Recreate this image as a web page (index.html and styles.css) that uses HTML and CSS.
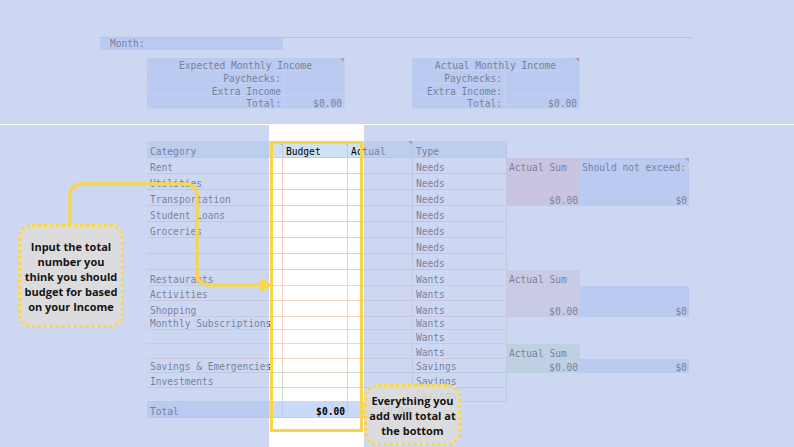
FILE: index.html
```html
<!DOCTYPE html>
<html lang="en">
<head>
<meta charset="utf-8">
<title>Monthly Budget</title>
<link rel="stylesheet" href="styles.css">
</head>
<body>
<div class="page">
  <div class="sheet">
    <div class="month-row"><div class="month-cell">Month:</div></div>

    <div class="income-row">
      <div class="income expected">
        <div class="inc-head comment">Expected Monthly Income</div>
        <div class="inc-label">Paychecks:</div><div class="inc-val"></div>
        <div class="inc-label">Extra Income</div><div class="inc-val"></div>
        <div class="inc-label">Total:</div><div class="inc-val">$0.00</div>
      </div>
      <div class="income actual">
        <div class="inc-head comment">Actual Monthly Income</div>
        <div class="inc-label">Paychecks:</div><div class="inc-val"></div>
        <div class="inc-label">Extra Income:</div><div class="inc-val"></div>
        <div class="inc-label">Total:</div><div class="inc-val">$0.00</div>
      </div>
    </div>

    <div class="budget">
      <div class="tbl">
        <div class="row head"><div class="c comment">Category</div><div class="c comment budget-h">Budget</div><div class="c comment">Actual</div><div class="c">Type</div></div>
        <div class="row needs"><div class="c">Rent</div><div class="c"></div><div class="c"></div><div class="c">Needs</div></div>
        <div class="row needs"><div class="c">Utilities</div><div class="c"></div><div class="c"></div><div class="c">Needs</div></div>
        <div class="row needs"><div class="c">Transportation</div><div class="c"></div><div class="c"></div><div class="c">Needs</div></div>
        <div class="row needs"><div class="c">Student Loans</div><div class="c"></div><div class="c"></div><div class="c">Needs</div></div>
        <div class="row needs"><div class="c">Groceries</div><div class="c"></div><div class="c"></div><div class="c">Needs</div></div>
        <div class="row needs"><div class="c"></div><div class="c"></div><div class="c"></div><div class="c">Needs</div></div>
        <div class="row needs"><div class="c"></div><div class="c"></div><div class="c"></div><div class="c">Needs</div></div>
        <div class="row wants"><div class="c">Restaurants</div><div class="c"></div><div class="c"></div><div class="c">Wants</div></div>
        <div class="row wants"><div class="c">Activities</div><div class="c"></div><div class="c"></div><div class="c">Wants</div></div>
        <div class="row wants"><div class="c">Shopping</div><div class="c"></div><div class="c"></div><div class="c">Wants</div></div>
        <div class="row wants"><div class="c">Monthly Subscriptions</div><div class="c"></div><div class="c"></div><div class="c">Wants</div></div>
        <div class="row wants"><div class="c"></div><div class="c"></div><div class="c"></div><div class="c">Wants</div></div>
        <div class="row wants"><div class="c"></div><div class="c"></div><div class="c"></div><div class="c">Wants</div></div>
        <div class="row saves"><div class="c">Savings &amp; Emergencies</div><div class="c"></div><div class="c"></div><div class="c">Savings</div></div>
        <div class="row saves"><div class="c">Investments</div><div class="c"></div><div class="c"></div><div class="c">Savings</div></div>
        <div class="row saves"><div class="c"></div><div class="c"></div><div class="c"></div><div class="c">Savings</div></div>
        <div class="row total"><div class="c">Total</div><div class="c num strong">$0.00</div><div class="c num">$0.00</div><div class="c plain"></div></div>
      </div>

      <div class="side">
        <div class="blk needs-sum"><span>Actual Sum</span><span class="num">$0.00</span></div>
        <div class="blk needs-cap comment"><span>Should not exceed:</span><span class="num">$0</span></div>
        <div class="blk wants-sum"><span>Actual Sum</span><span class="num">$0.00</span></div>
        <div class="blk wants-cap"><span class="num">$0</span></div>
        <div class="blk save-sum"><span>Actual Sum</span><span class="num">$0.00</span></div>
        <div class="blk save-cap"><span class="num">$0</span></div>
      </div>
    </div>
  </div>

  <div class="shade shade-top"></div>
  <div class="shade shade-left"></div>
  <div class="shade shade-right"></div>

  <div class="focus-box"></div>

  <svg class="arrow" width="794" height="447" viewBox="0 0 794 447">
    <path d="M70 224 V196 Q70 184 82 184 H185 Q197 184 197 196 V273 Q197 285 209 285 H262" fill="none" stroke="#f8d64c" stroke-width="3.5" stroke-linecap="round" stroke-linejoin="round"/>
    <path d="M261 279 L271 285 L261 291 Z" fill="#f8d64c" stroke="#f8d64c" stroke-width="1.5" stroke-linejoin="round"/>
  </svg>

  <div class="callout callout-left">Input the total<br>number you<br>think you should<br>budget for based<br>on your Income</div>
  <div class="callout callout-bottom">Everything you<br>add will total at<br>the bottom</div>
</div>
</body>
</html>
```

FILE: styles.css
```css
* { box-sizing: border-box; }

html, body {
  margin: 0;
  padding: 0;
  background: #ffffff;
}

.page {
  position: relative;
  width: 794px;
  height: 447px;
  overflow: hidden;
  background: #ffffff;
  font-family: "DejaVu Sans Mono", "Liberation Mono", monospace;
  font-size: 9.6px;
  color: #000;
}

.sheet {
  padding-top: 37px;
}

/* ---------- month ---------- */
.month-row {
  margin-left: 100px;
  width: 593px;
  border-top: 1px solid #b8c2d8;
}

.month-cell {
  width: 183px;
  height: 12px;
  line-height: 12px;
  padding-left: 10px;
  background: #c9daf8;
}

/* ---------- income tables ---------- */
.income-row {
  display: flex;
  gap: 67px;
  margin-top: 8px;
  padding-left: 147px;
}

.income {
  display: grid;
  grid-template-rows: 13px 13px 12px 13px;
  background: #c9daf8;
}

.expected { grid-template-columns: 137px 61px; }
.actual { grid-template-columns: 93px 75px; }

.income > div {
  border-right: 1px solid #dfe8fb;
  border-bottom: 1px solid #dfe8fb;
  line-height: 11px;
  padding-top: 2px;
  white-space: nowrap;
}

.inc-head {
  grid-column: 1 / -1;
  text-align: center;
}

.inc-label {
  text-align: right;
  padding-right: 2px;
}

.inc-val {
  text-align: right;
  padding-right: 2px;
}

/* ---------- budget table ---------- */
.budget {
  display: flex;
  margin-top: 32px;
  padding-left: 147px;
}

.tbl, .side {
  display: grid;
  grid-template-rows: 17px 16px 16px 16px 16px 16px 16px 16px 16px 15px 16px 13px 14px 15px 14px 15px 14px 16px;
}

.tbl {
  grid-template-columns: 136px 65px 65px 94px;
}

.side {
  grid-template-columns: 73px 109px;
}

.row { display: contents; }
.row.head { --line: #b7cde9; --bg: #cfe2f3; }
.row.needs { --line: #f2c9c6; --bg: #ffffff; }
.row.wants { --line: #f8d6bd; --bg: #ffffff; }
.row.saves { --line: #cfe0c8; --bg: #ffffff; }
.row.total { --line: #b9cdf0; --bg: #c9daf8; }

.c {
  position: relative;
  display: flex;
  align-items: flex-end;
  padding: 0 3px;
  line-height: 10px;
  white-space: nowrap;
  background: var(--bg);
  border-right: 1px solid var(--line);
  border-bottom: 1px solid var(--line);
}

.c.num {
  justify-content: flex-end;
  padding-right: 2px;
}

.c.strong { font-weight: bold; }

.c.plain {
  background: transparent;
  border-color: transparent;
}

/* ---------- sum blocks ---------- */
.blk {
  position: relative;
  display: flex;
  flex-direction: column;
  justify-content: space-between;
  padding: 5px 2px 0;
  line-height: 10px;
  white-space: nowrap;
}

.blk .num { text-align: right; }

.needs-sum { grid-row: 2 / 5; grid-column: 1; background: #f4cccc; }
.needs-cap { grid-row: 2 / 5; grid-column: 2; background: #c9daf8; }
.wants-sum { grid-row: 9 / 12; grid-column: 1; background: #f3dcd6; }
.wants-cap { grid-row: 10 / 12; grid-column: 2; background: #c9daf8; justify-content: flex-end; }
.save-sum { grid-row: 14 / 16; grid-column: 1; background: #d9ead3; }
.save-cap { grid-row: 15 / 16; grid-column: 2; background: #c9daf8; justify-content: flex-end; }

/* comment markers */
.comment { position: relative; }
.comment::after {
  content: "";
  position: absolute;
  top: 0;
  right: 0;
  border-top: 4px solid #e0443a;
  border-left: 4px solid transparent;
}

/* ---------- shading overlay ---------- */
.shade {
  position: absolute;
  background: rgba(178, 194, 235, 0.65);
}

.shade-top { left: 0; top: 0; width: 794px; height: 124px; }
.shade-left { left: 0; top: 125px; width: 269px; height: 322px; }
.shade-right { left: 364px; top: 125px; width: 430px; height: 322px; }

/* ---------- highlight + annotations ---------- */
.focus-box {
  position: absolute;
  left: 270px;
  top: 141px;
  width: 93px;
  height: 291px;
  border: 3px solid #f8d64c;
}

.arrow {
  position: absolute;
  left: 0;
  top: 0;
}

.callout {
  position: absolute;
  display: flex;
  align-items: center;
  justify-content: center;
  text-align: center;
  white-space: nowrap;
  font-family: "Open Sans", "Liberation Sans", sans-serif;
  font-weight: 700;
  font-size: 11px;
  line-height: 15px;
  color: #141414;
  background: rgba(224, 221, 216, 0.8);
  border: 3px dotted #f8d64c;
  border-radius: 14px;
}

.callout-left {
  left: 18px;
  top: 224px;
  width: 106px;
  height: 104px;
}

.callout-bottom {
  left: 364px;
  top: 384px;
  width: 97px;
  height: 62px;
}
```
